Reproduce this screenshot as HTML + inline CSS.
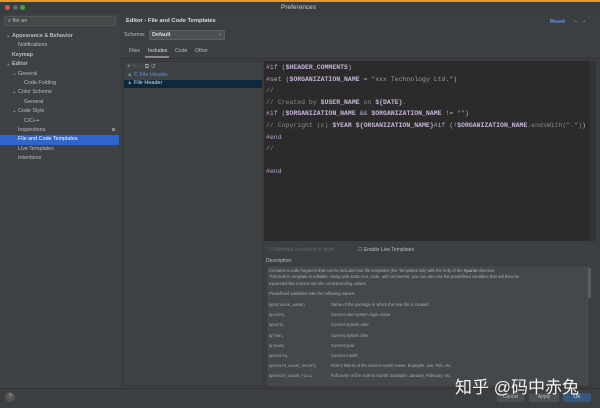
<!DOCTYPE html>
<html><head><style>
*{margin:0;padding:0;box-sizing:border-box}
body{width:600px;height:408px;background:#3c3f41;font-family:"Liberation Sans",sans-serif;color:#bbb;font-size:6px;position:relative;overflow:hidden}
.a{position:absolute}
.t{white-space:nowrap}
.code{font-family:"Liberation Mono",monospace;font-size:6.5px;color:#b8b0c4;line-height:11.6px}
.k{color:#b9a9c9}.c{color:#8a8a8a}.s{color:#9a9a9a}.v{color:#c6b4d8;font-weight:bold}
.d{font-size:4.2px;color:#aaa}
</style></head><body>
<div class="a" style="left:0;top:0;width:600px;height:2px;background:#e39a2d"></div>
<div class="a" style="left:0;top:2px;width:600px;height:12px;background:#3a3d40"></div>
<div class="a" style="left:5px;top:5px;width:5px;height:5px;border-radius:50%;background:#e0544c"></div>
<div class="a" style="left:13px;top:5px;width:5px;height:5px;border-radius:50%;background:#666"></div>
<div class="a" style="left:20px;top:5px;width:5px;height:5px;border-radius:50%;background:#3eaa3f"></div>
<div class="a t" style="left:281px;top:4px;font-size:6.5px;color:#ccc">Preferences</div>
<div class="a" style="left:0;top:14px;width:119px;height:374px;background:#3e4246"></div>
<div class="a" style="left:4px;top:16px;width:112px;height:10px;border:1px solid #555;border-radius:2px;background:#45494a"></div>
<div class="a t" style="left:8px;top:18px;font-size:5.5px">⌕ file an</div>
<div class="a t" style="left:6px;top:32px;line-height:9.4px;font-size:5.4px">
<div>⌄ <b>Appearance &amp; Behavior</b></div>
<div style="padding-left:12px">Notifications</div>
<div style="padding-left:6px"><b>Keymap</b></div>
<div>⌄ <b>Editor</b></div>
<div style="padding-left:6px">⌄ General</div>
<div style="padding-left:18px">Code Folding</div>
<div style="padding-left:6px">⌄ Color Scheme</div>
<div style="padding-left:18px">General</div>
<div style="padding-left:6px">⌄ Code Style</div>
<div style="padding-left:18px">C/C++</div>
<div style="padding-left:12px">Inspections</div>
<div style="padding-left:12px;color:#fff;background:#2f65ca;margin-left:-6px;padding-left:18px;width:119px">File and Code Templates</div>
<div style="padding-left:12px">Live Templates</div>
<div style="padding-left:12px">Intentions</div>
</div>
<div class="a" style="left:112px;top:128px;width:3px;height:3px;background:#888"></div>
<div class="a t" style="left:126px;top:18px;font-size:5.8px;color:#ddd"><b>Editor</b> › <b>File and Code Templates</b></div>
<div class="a t" style="left:550px;top:19px;font-size:5.5px;color:#589df6"><b>Reset</b></div>
<div class="a t" style="left:573px;top:18px;font-size:6px;color:#aaa">← →</div>
<div class="a t" style="left:124px;top:32px;font-size:5.5px">Scheme:</div>
<div class="a" style="left:149px;top:30px;width:76px;height:10px;background:#4c5052;border:1px solid #5e6060;border-radius:2px"></div>
<div class="a t" style="left:152px;top:32px;font-size:5.5px;color:#ddd"><b>Default</b></div>
<div class="a t" style="left:218px;top:31px;font-size:5px">⌄</div>
<div class="a t" style="left:129px;top:48px;font-size:5.2px">Files</div>
<div class="a t" style="left:148px;top:48px;font-size:5.2px;color:#ddd">Includes</div>
<div class="a" style="left:145px;top:56px;width:24px;height:2px;background:#888"></div>
<div class="a t" style="left:175px;top:48px;font-size:5.2px">Code</div>
<div class="a t" style="left:195px;top:48px;font-size:5.2px">Other</div>
<div class="a" style="left:120px;top:58px;width:480px;height:1px;background:#333"></div>
<div class="a" style="left:123px;top:61px;width:140px;height:325px;background:#3e4244;border:1px solid #343638"></div>
<div class="a t" style="left:127px;top:63px;font-size:6px;color:#aaa">+ <span style="color:#666">✎ ─</span> ⧉ ↺</div>
<div class="a t" style="left:127px;top:72px;font-size:5.5px;color:#6a8fd0">▲ C File Header</div>
<div class="a" style="left:124px;top:80px;width:138px;height:8px;background:#0d293e"></div>
<div class="a t" style="left:127px;top:80px;font-size:5.5px;color:#ddd"><span style="color:#6a8fd0">▲</span> File Header</div>
<div class="a" style="left:264px;top:61px;width:326px;height:180px;background:#2b2b2b"></div>
<div class="a" style="left:590px;top:61px;width:6px;height:180px;background:#333"></div>
<div class="a t code" style="left:266px;top:62px">
<div><span class="k">#if</span> (<span class="v">$HEADER_COMMENTS</span>)</div>
<div><span class="k">#set</span> (<span class="v">$ORGANIZATION_NAME</span> = <span class="s">"xxx Technology Ltd."</span>)</div>
<div class="c">//</div>
<div><span class="c">// Created by </span><span class="v">$USER_NAME</span><span class="c"> on </span><span class="v">${DATE}</span><span class="c">.</span></div>
<div><span class="k">#if</span> (<span class="v">$ORGANIZATION_NAME</span> &amp;&amp; <span class="v">$ORGANIZATION_NAME</span> != <span class="s">""</span>)</div>
<div><span class="c">// Copyright (c) </span><span class="v">$YEAR ${ORGANIZATION_NAME}</span><span class="k">#if</span> (!<span class="v">$ORGANIZATION_NAME</span><span class="c">.endsWith(".")</span>)</div>
<div class="k">#end</div>
<div class="c">//</div>
<div>&nbsp;</div>
<div class="k">#end</div>
</div>
<div class="a t" style="left:267px;top:247px;font-size:5px;color:#666">☐ Reformat according to style</div>
<div class="a t" style="left:358px;top:247px;font-size:5px">☐ Enable Live Templates</div>
<div class="a t" style="left:266px;top:258px;font-size:5px">Description:</div>
<div class="a" style="left:266px;top:265px;width:324px;height:122px;background:#45484a;border:1px solid #3a3a3a"></div>
<div class="a" style="left:588px;top:268px;width:3px;height:30px;background:#5a5d5f"></div>
<div class="a t d" style="left:269px;top:268px;line-height:6.3px">
<div>Contains a code fragment that can be included into file templates (the Templates tab) with the help of the <b>#parse</b> directive.</div>
<div>This built-in template is editable. Along with static text, code, and comments, you can also use the predefined variables that will then be</div>
<div>expanded like macros into the corresponding values.</div>
<div style="margin-top:4px">Predefined variables take the following values:</div>
</div>
<div class="a t d" style="left:269px;top:300px;line-height:10.2px;font-size:3.8px"><div>${PACKAGE_NAME}</div><div>${USER}</div><div>${DATE}</div><div>${TIME}</div><div>${YEAR}</div><div>${MONTH}</div><div>${MONTH_NAME_SHORT}</div><div>${MONTH_NAME_FULL}</div></div>
<div class="a t d" style="left:331px;top:300px;line-height:10.2px"><div>Name of the package in which the new file is created</div><div>Current user system login name</div><div>Current system date</div><div>Current system time</div><div>Current year</div><div>Current month</div><div>First 3 letters of the current month name. Example: Jan, Feb, etc.</div><div>Full name of the current month. Example: January, February, etc.</div></div>
<div class="a" style="left:0;top:388px;width:600px;height:20px;background:#3c3f41;border-top:1px solid #323232"></div>
<div class="a" style="left:5px;top:392px;width:10px;height:10px;border-radius:50%;background:#555;color:#bbb;font-size:6px;text-align:center;line-height:10px">?</div>
<div class="a" style="left:497px;top:393px;width:27px;height:9px;background:#4c5052;border-radius:2px;font-size:5px;text-align:center;line-height:9px">Cancel</div>
<div class="a" style="left:529px;top:393px;width:30px;height:9px;background:#4c5052;border-radius:2px;font-size:5px;text-align:center;line-height:9px">Apply</div>
<div class="a" style="left:563px;top:393px;width:28px;height:9px;background:#365880;border-radius:2px;font-size:5px;text-align:center;line-height:9px;color:#ddd">OK</div>
<div class="a t" style="left:455px;top:373px;font-size:17px;color:#f2f2f2;z-index:5;font-family:'Liberation Sans','Noto Sans CJK SC',sans-serif">知乎 @码中赤兔</div>
</body></html>
